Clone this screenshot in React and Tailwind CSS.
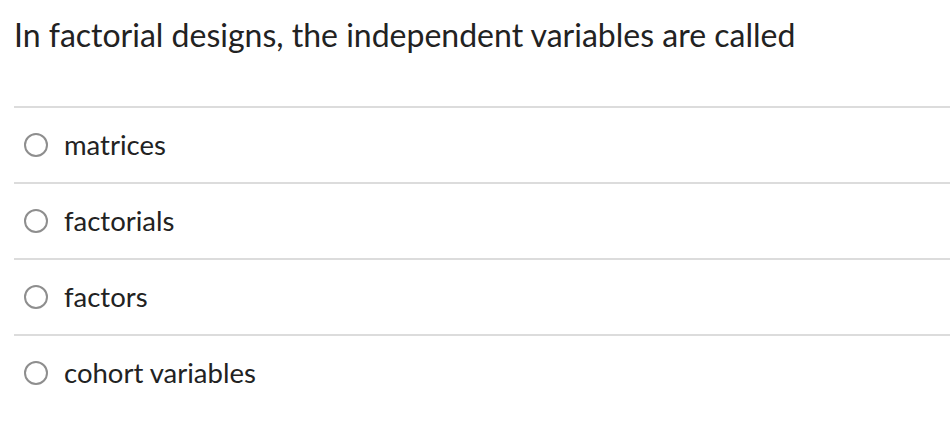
import React from 'react';

const options = ['matrices', 'factorials', 'factors', 'cohort variables'];

function Radio() {
  return <span className="w-[24px] h-[24px] rounded-full border-2 border-[#8e8e8e] bg-white shrink-0" />;
}

export default function App() {
  return (
    <div className="w-[950px] h-[428px] bg-white pl-[14px]" style={{ fontFamily: 'Lato, "Noto Sans", sans-serif' }}>
      <div className="pt-[13px] pb-[49px] text-[32px] leading-[44px] text-[#222]">
        In factorial designs, the independent variables are called
      </div>
      {options.map((o) => (
        <div key={o} className="border-t-2 border-[#dcdcdc] h-[76px] flex items-center gap-[16px] pl-[10px] text-[27.5px] text-[#222]">
          <Radio />
          <span>{o}</span>
        </div>
      ))}
    </div>
  );
}
